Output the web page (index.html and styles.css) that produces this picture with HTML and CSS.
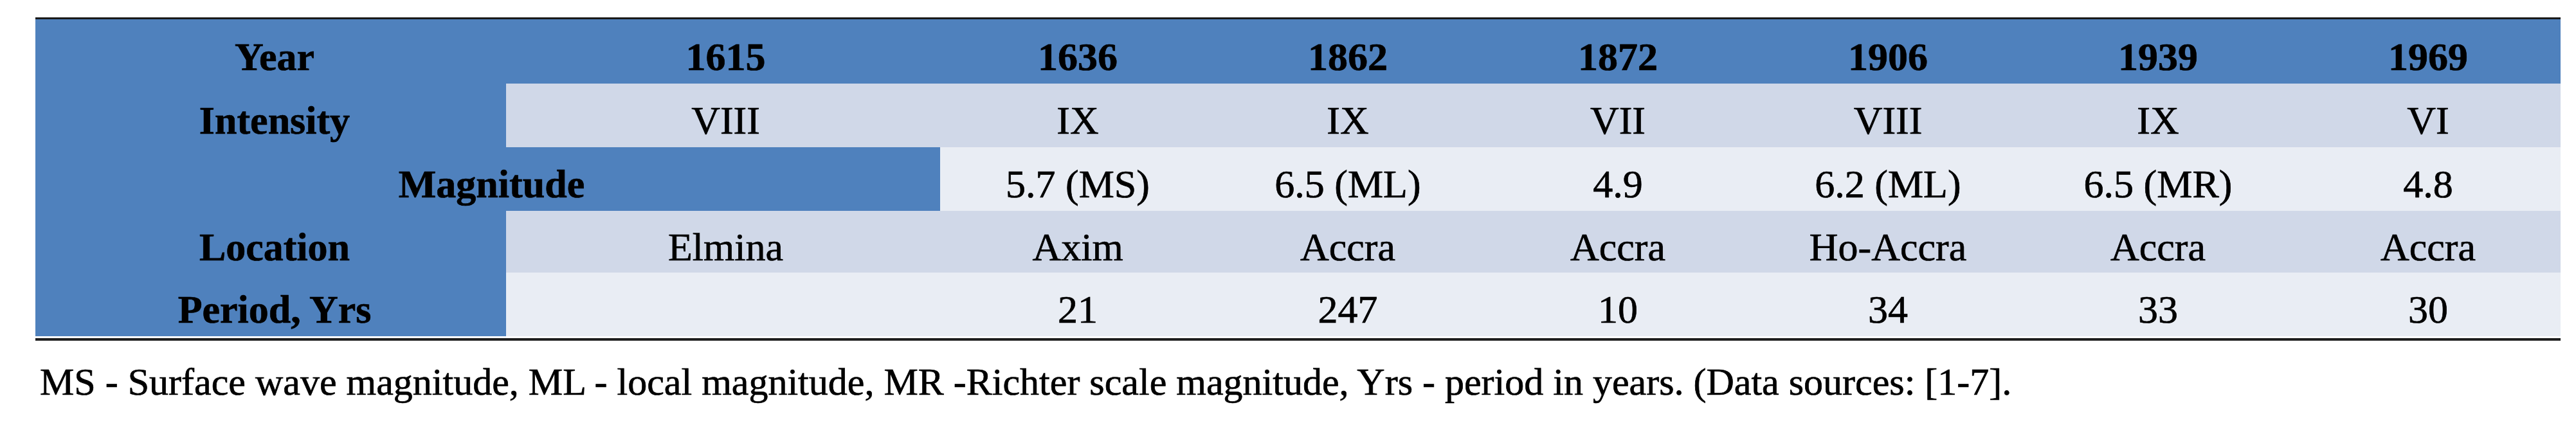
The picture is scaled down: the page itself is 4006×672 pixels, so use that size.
FILE: index.html
```html
<!DOCTYPE html>
<html lang="en">
<head>
<meta charset="utf-8">
<title>Earthquakes in Ghana</title>
<link rel="stylesheet" href="styles.css">
</head>
<body>
<div class="page">
  <table class="quake">
    <colgroup>
      <col class="c-label">
      <col class="c-first">
      <col class="c-data"><col class="c-data"><col class="c-data">
      <col class="c-data"><col class="c-data"><col class="c-data">
    </colgroup>
    <tr class="row-head">
      <th class="lbl">Year</th>
      <th>1615</th><th>1636</th><th>1862</th><th>1872</th><th>1906</th><th>1939</th><th>1969</th>
    </tr>
    <tr class="band-a">
      <th class="lbl">Intensity</th>
      <td>VIII</td><td>IX</td><td>IX</td><td>VII</td><td>VIII</td><td>IX</td><td>VI</td>
    </tr>
    <tr class="band-b">
      <th class="lbl" colspan="2">Magnitude</th>
      <td>5.7 (MS)</td><td>6.5 (ML)</td><td>4.9</td><td>6.2 (ML)</td><td>6.5 (MR)</td><td>4.8</td>
    </tr>
    <tr class="band-a row-short">
      <th class="lbl">Location</th>
      <td>Elmina</td><td>Axim</td><td>Accra</td><td>Accra</td><td>Ho-Accra</td><td>Accra</td><td>Accra</td>
    </tr>
    <tr class="band-b">
      <th class="lbl">Period, Yrs</th>
      <td></td><td>21</td><td>247</td><td>10</td><td>34</td><td>33</td><td>30</td>
    </tr>
  </table>
  <p class="note">MS - Surface wave magnitude, ML - local magnitude, MR -Richter scale magnitude, Yrs - period in years. (Data sources: [1-7].</p>
</div>
</body>
</html>
```

FILE: styles.css
```css
html, body {
  margin: 0;
  padding: 0;
  background: #ffffff;
}

.page {
  padding: 27px 0 0 55px;
  font-family: "Liberation Serif", "Times New Roman", serif;
  color: #000000;
}

.quake {
  border-collapse: separate;
  border-spacing: 0;
  table-layout: fixed;
  width: 3927px;
  border-top: 3px solid #1a1a1a;
  border-bottom: 4px solid #1f1f1f;
  padding: 0 0 3px 0;
  font-size: 62px;
}

.c-label { width: 732px; }
.c-first { width: 675px; }
.c-data  { width: 420px; }

.quake th,
.quake td {
  height: 99px;
  padding: 16px 0 0 8px;
  box-sizing: border-box;
  text-align: center;
  vertical-align: middle;
  line-height: 1.1;
  white-space: nowrap;
  -webkit-text-stroke: 0.7px #000000;
}

.quake th {
  font-weight: bold;
}

.quake td {
  font-weight: normal;
}

.row-head th {
  background: #4f81bd;
  height: 100px;
}

.row-short th,
.row-short td {
  height: 96px;
}

.band-a td {
  background: #d0d8e8;
}

.band-b td {
  background: #e9edf4;
}

.quake .lbl {
  background: #4f81bd;
  padding-left: 12px;
}

.note {
  margin: 30px 0 0 7px;
  font-size: 60px;
  line-height: 1.15;
  -webkit-text-stroke: 0.7px #000000;
}
```
